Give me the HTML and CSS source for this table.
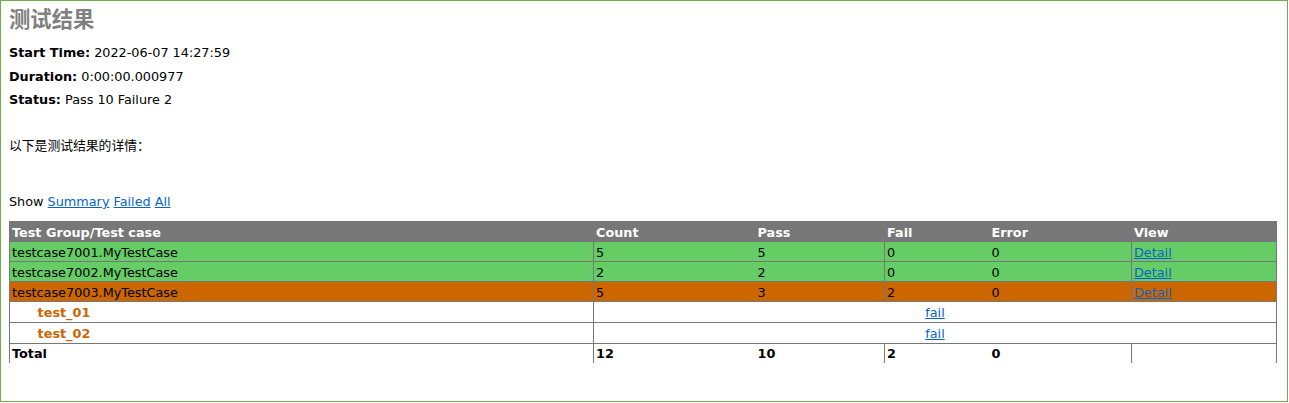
FILE: index.html
```html
<!DOCTYPE html>
<html lang="zh-CN">
<head>
<meta charset="utf-8">
<title>测试结果</title>
<link rel="stylesheet" href="styles.css">
</head>
<body>
<div class="frame">
  <div class="heading">
    <h1>测试结果</h1>
    <p class="attribute first"><strong>Start Time:</strong> 2022-06-07 14:27:59</p>
    <p class="attribute"><strong>Duration:</strong> 0:00:00.000977</p>
    <p class="attribute"><strong>Status:</strong> Pass 10 Failure 2</p>
    <p class="description">以下是测试结果的详情：</p>
  </div>
  <p class="show-line">Show <a href="#">Summary</a> <a href="#">Failed</a> <a href="#">All</a></p>
  <table class="result">
    <colgroup>
      <col class="w-name">
      <col class="w-count">
      <col class="w-pass">
      <col class="w-fail">
      <col class="w-error">
      <col class="w-view">
    </colgroup>
    <tr class="header-row">
      <th>Test Group/Test case</th>
      <th class="no-r">Count</th>
      <th class="no-l">Pass</th>
      <th class="no-r">Fail</th>
      <th class="no-l">Error</th>
      <th>View</th>
    </tr>
    <tr class="pass-class">
      <td>testcase7001.MyTestCase</td>
      <td class="no-r">5</td>
      <td class="no-l">5</td>
      <td class="no-r">0</td>
      <td class="no-l">0</td>
      <td><a href="#">Detail</a></td>
    </tr>
    <tr class="pass-class">
      <td>testcase7002.MyTestCase</td>
      <td class="no-r">2</td>
      <td class="no-l">2</td>
      <td class="no-r">0</td>
      <td class="no-l">0</td>
      <td><a href="#">Detail</a></td>
    </tr>
    <tr class="fail-class">
      <td>testcase7003.MyTestCase</td>
      <td class="no-r">5</td>
      <td class="no-l">3</td>
      <td class="no-r">2</td>
      <td class="no-l">0</td>
      <td><a href="#">Detail</a></td>
    </tr>
    <tr class="case-row">
      <td class="fail-case"><div class="testcase">test_01</div></td>
      <td colspan="5" class="center"><a href="#">fail</a></td>
    </tr>
    <tr class="case-row">
      <td class="fail-case"><div class="testcase">test_02</div></td>
      <td colspan="5" class="center"><a href="#">fail</a></td>
    </tr>
    <tr class="total-row">
      <td>Total</td>
      <td class="no-r">12</td>
      <td class="no-l">10</td>
      <td class="no-r">2</td>
      <td class="no-l">0</td>
      <td>&nbsp;</td>
    </tr>
  </table>
</div>
</body>
</html>
```

FILE: styles.css
```css
html, body {
  margin: 0;
  padding: 0;
  background: #fff;
}

body {
  font-family: "DejaVu Sans", "Noto Sans CJK SC", sans-serif;
  font-size: 12.8px;
  color: #000;
}

.frame {
  box-sizing: border-box;
  width: 1288px;
  height: 402px;
  border: 1px solid #70ad47;
  padding: 5px 11px 0 8px;
  overflow: hidden;
}

h1 {
  margin: 0;
  font-family: "Noto Sans CJK SC", "DejaVu Sans", sans-serif;
  font-size: 21.33px;
  line-height: 24px;
  font-weight: bold;
  color: #808080;
}

.attribute {
  margin: 8.5px 0 0;
  line-height: 15px;
}

.attribute.first {
  margin-top: 15px;
}

.description {
  margin: 30.5px 0 0;
  line-height: 15px;
}

.show-line {
  margin: 41.5px 0 0;
  line-height: 15px;
}

a {
  color: #0a64c8;
  text-decoration: underline;
}

.result {
  margin-top: 12px;
  width: 1267px;
  table-layout: fixed;
  border-collapse: collapse;
  font-size: 12.8px;
}

.w-name { width: 584px; }
.w-count { width: 162px; }
.w-pass { width: 129px; }
.w-fail { width: 105px; }
.w-error { width: 142px; }
.w-view { width: 145px; }

.result th,
.result td {
  border: 1px solid #777;
  padding: 3px 2px 1px;
  line-height: 15px;
  text-align: left;
  vertical-align: middle;
  white-space: nowrap;
}

.result .no-r { border-right: none; }
.result .no-l { border-left: none; }

.header-row th {
  background: #777;
  color: #fff;
  font-weight: bold;
}

.pass-class td { background: #66cc66; }
.fail-class td { background: #cc6600; }

.result .case-row td {
  line-height: 16px;
  padding: 3px 2px 1px;
}

.fail-case {
  color: #cc6600;
  font-weight: bold;
}

.testcase {
  margin-left: 2em;
}

.result td.center {
  text-align: center;
}

.result .total-row td {
  font-weight: bold;
  border-bottom: none;
  padding: 2px 2px 2px;
}
```
